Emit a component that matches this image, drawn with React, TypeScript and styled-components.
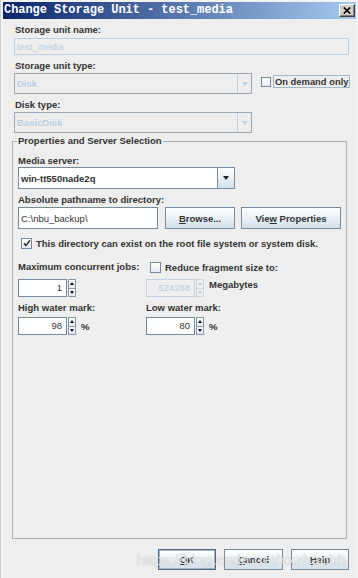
import styled, { createGlobalStyle } from "styled-components";

const GlobalStyle = createGlobalStyle`
  * {
    box-sizing: border-box;
  }
  html,
  body {
    margin: 0;
    padding: 0;
  }
  body {
    width: 358px;
    height: 578px;
    overflow: hidden;
    background: #eeeeee;
    font-family: "Liberation Sans", Arial, sans-serif;
  }
`;

const Window = styled.div`
  width: 358px;
  height: 578px;
  display: flex;
  flex-direction: column;
  padding: 2px 2px 0 2px;
  background: #f3f3f3;
  border-left: 1px solid #d0d0d0;
`;

const TitleBar = styled.div`
  flex: none;
  height: 17px;
  display: flex;
  align-items: center;
  justify-content: space-between;
  padding: 0 1px 0 1px;
  background: linear-gradient(to right, #0a246a 0%, #a6caf0 100%);
`;

const TitleText = styled.div`
  font-family: "Liberation Mono", "Courier New", monospace;
  font-weight: bold;
  font-size: 12px;
  line-height: 17px;
  letter-spacing: -0.05px;
  color: #ffffff;
  white-space: nowrap;
`;

const CloseButton = styled.div`
  width: 16px;
  height: 13px;
  display: flex;
  align-items: center;
  justify-content: center;
  background: #d4d0c8;
  border: 1px solid;
  border-color: #ffffff #404040 #404040 #ffffff;
  box-shadow: inset -1px -1px #808080;
`;

const Body = styled.div`
  flex: 1;
  min-height: 0;
  display: flex;
  flex-direction: column;
  padding: 5px 7px 8px 9px;
  background: #eeeeee;
`;

const TopSection = styled.div`
  flex: none;
  margin-left: 2px;
  display: flex;
  flex-direction: column;
`;

const Label = styled.div<{ $mt?: number; $mb?: number; $pl?: number }>`
  margin-top: ${(p) => p.$mt ?? 0}px;
  margin-bottom: ${(p) => p.$mb ?? 0}px;
  padding-left: ${(p) => p.$pl ?? 0}px;
  height: 12px;
  line-height: 12px;
  font-size: 9.5px;
  font-weight: bold;
  color: #333333;
  white-space: nowrap;
`;

const TextField = styled.div<{ $w: number; $h: number; $disabled?: boolean }>`
  flex: none;
  width: ${(p) => p.$w}px;
  height: ${(p) => p.$h}px;
  display: flex;
  align-items: center;
  padding-left: 2px;
  border: 1px solid ${(p) => (p.$disabled ? "#b8cfe5" : "#7a8a99")};
  background: ${(p) => (p.$disabled ? "#eeeeee" : "#ffffff")};
  color: ${(p) => (p.$disabled ? "#b8cfe5" : "#333333")};
  font-size: 9.5px;
  white-space: nowrap;
`;

const ComboFrame = styled.div<{ $w: number; $h: number; $disabled?: boolean }>`
  flex: none;
  width: ${(p) => p.$w}px;
  height: ${(p) => p.$h}px;
  display: flex;
  border: 1px solid ${(p) => (p.$disabled ? "#9ba7b3" : "#7a8a99")};
  background: ${(p) => (p.$disabled ? "#eeeeee" : "#ffffff")};
`;

const ComboValue = styled.div<{ $disabled?: boolean }>`
  flex: 1;
  display: flex;
  align-items: center;
  padding-left: 2px;
  font-size: 9.5px;
  font-weight: bold;
  color: ${(p) => (p.$disabled ? "#b8cfe5" : "#333333")};
  white-space: nowrap;
`;

const ComboArrow = styled.div<{ $w: number; $disabled?: boolean }>`
  flex: none;
  width: ${(p) => p.$w}px;
  display: flex;
  align-items: center;
  justify-content: center;
  border-left: 1px solid ${(p) => (p.$disabled ? "#c4ccd4" : "#7a8a99")};
  background: ${(p) =>
    p.$disabled
      ? "#eeeeee"
      : "linear-gradient(to bottom, #ffffff 0%, #eef3f8 40%, #d3e0ec 100%)"};
`;

const DownArrow = styled.span<{ $disabled?: boolean }>`
  width: 0;
  height: 0;
  border-left: 3.5px solid transparent;
  border-right: 3.5px solid transparent;
  border-top: 4px solid ${(p) => (p.$disabled ? "#b8cfe5" : "#222222")};
`;

const ComboRow = styled.div`
  display: flex;
  align-items: flex-start;
`;

const DemandCheck = styled.div`
  display: flex;
  align-items: center;
  gap: 2px;
  margin-left: 9px;
  margin-top: 2px;
`;

const FocusLabel = styled.div`
  height: 13px;
  line-height: 11px;
  padding: 0 1px;
  border: 1px solid #a3b8cc;
  font-size: 9.4px;
  font-weight: bold;
  color: #333333;
  white-space: nowrap;
`;

const CheckBox = styled.span<{ $size: number }>`
  flex: none;
  width: ${(p) => p.$size}px;
  height: ${(p) => p.$size}px;
  display: inline-flex;
  align-items: center;
  justify-content: center;
  border: 1px solid #7a8a99;
  background: linear-gradient(to bottom, #ffffff 0%, #e3ebf4 100%);
`;

const Group = styled.fieldset`
  flex: 1;
  min-height: 0;
  min-width: 0;
  margin: 2px 2px 0 0;
  padding: 0;
  border: 1px solid #a9b0b8;
`;

const Legend = styled.legend`
  margin-left: 4px;
  padding: 0 1px;
  height: 12px;
  line-height: 12px;
  font-size: 9.5px;
  font-weight: bold;
  color: #333333;
  white-space: nowrap;
`;

const GroupBody = styled.div`
  display: flex;
  flex-direction: column;
  padding-left: 5px;
`;

const PathRow = styled.div`
  display: flex;
`;

const PushButton = styled.div<{ $w: number; $h: number; $ml?: number; $default?: boolean }>`
  flex: none;
  width: ${(p) => p.$w}px;
  height: ${(p) => p.$h}px;
  margin-left: ${(p) => p.$ml ?? 0}px;
  display: flex;
  align-items: center;
  justify-content: center;
  border: 1px solid ${(p) => (p.$default ? "#53687f" : "#7a8a99")};
  box-shadow: ${(p) => (p.$default ? "inset 0 0 0 1px #9fb3c7" : "none")};
  background: linear-gradient(to bottom, #ffffff 0%, #f0f5fa 35%, #d2dfec 100%);
  font-size: 9.5px;
  font-weight: bold;
  color: #333333;
  white-space: pre;
`;

const Mnemonic = styled.span`
  text-decoration: underline;
`;

const CheckRow = styled.div<{ $mt?: number; $ml?: number }>`
  display: flex;
  align-items: center;
  gap: 4px;
  height: 12px;
  margin-top: ${(p) => p.$mt ?? 0}px;
  margin-left: ${(p) => p.$ml ?? 0}px;
`;

const CheckText = styled.span`
  font-size: 9.5px;
  font-weight: bold;
  color: #333333;
  white-space: nowrap;
`;

const OptionRow = styled.div<{ $mt: number }>`
  display: grid;
  grid-template-columns: 128px 1fr;
  margin-top: ${(p) => p.$mt}px;
`;

const SpinRow = styled.div`
  display: flex;
  align-items: flex-start;
`;

const SpinFrame = styled.div`
  flex: none;
  display: flex;
  gap: 1px;
  height: 18px;
`;

const SpinField = styled.div<{ $disabled?: boolean }>`
  width: 49px;
  height: 18px;
  padding-right: 4px;
  text-align: right;
  line-height: 16px;
  border: 1px solid ${(p) => (p.$disabled ? "#c6d3e0" : "#7a8a99")};
  background: ${(p) => (p.$disabled ? "#eeeeee" : "#ffffff")};
  color: ${(p) => (p.$disabled ? "#b8cfe5" : "#333333")};
  font-size: 9.5px;
`;

const SpinButtons = styled.div`
  width: 8px;
  display: flex;
  flex-direction: column;
`;

const SpinButton = styled.div<{ $disabled?: boolean }>`
  flex: 1;
  display: flex;
  align-items: center;
  justify-content: center;
  border: 1px solid ${(p) => (p.$disabled ? "#cdd6df" : "#8d9aa7")};
  background: ${(p) =>
    p.$disabled ? "#eeeeee" : "linear-gradient(to bottom, #ffffff 0%, #dde7f1 100%)"};
  & + & {
    border-top: none;
  }
`;

const TinyArrow = styled.span<{ $up?: boolean; $disabled?: boolean }>`
  width: 0;
  height: 0;
  border-left: 2px solid transparent;
  border-right: 2px solid transparent;
  ${(p) =>
    p.$up
      ? `border-bottom: 3px solid ${p.$disabled ? "#c0ccd8" : "#111111"};`
      : `border-top: 3px solid ${p.$disabled ? "#c0ccd8" : "#111111"};`}
`;

const Unit = styled.span<{ $mt?: number }>`
  margin-left: 5px;
  margin-top: ${(p) => p.$mt ?? 0}px;
  line-height: 12px;
  font-size: 9.5px;
  font-weight: bold;
  color: #333333;
  white-space: nowrap;
`;

const ButtonRow = styled.div`
  position: relative;
  flex: none;
  display: flex;
  justify-content: flex-end;
  gap: 8px;
  margin-top: 10px;
`;

const Watermark = styled.div`
  position: absolute;
  right: 3px;
  top: 0;
  z-index: 1;
  line-height: 21px;
  font-size: 15.5px;
  color: rgba(255, 255, 255, 0.72);
  text-shadow: 0 0 1px rgba(110, 110, 110, 0.55);
  white-space: nowrap;
  pointer-events: none;
`;

function ComboBox({
  value,
  width,
  height,
  arrowWidth,
  disabled,
}: {
  value: string;
  width: number;
  height: number;
  arrowWidth: number;
  disabled?: boolean;
}) {
  return (
    <ComboFrame $w={width} $h={height} $disabled={disabled}>
      <ComboValue $disabled={disabled}>{value}</ComboValue>
      <ComboArrow $w={arrowWidth} $disabled={disabled}>
        <DownArrow $disabled={disabled} />
      </ComboArrow>
    </ComboFrame>
  );
}

function Spinner({ value, disabled }: { value: string; disabled?: boolean }) {
  return (
    <SpinFrame>
      <SpinField $disabled={disabled}>{value}</SpinField>
      <SpinButtons>
        <SpinButton $disabled={disabled}>
          <TinyArrow $up $disabled={disabled} />
        </SpinButton>
        <SpinButton $disabled={disabled}>
          <TinyArrow $disabled={disabled} />
        </SpinButton>
      </SpinButtons>
    </SpinFrame>
  );
}

const CheckMark = () => (
  <svg width="8" height="8" viewBox="0 0 8 8">
    <path d="M1 4.2 L3 6.6 L7 1.2" fill="none" stroke="#2b2b2b" strokeWidth="1.5" />
  </svg>
);

export default function App() {
  return (
    <>
      <GlobalStyle />
      <Window>
        <TitleBar>
          <TitleText>Change Storage Unit - test_media</TitleText>
          <CloseButton>
            <svg width="8" height="7" viewBox="0 0 8 7">
              <path d="M0.8 0.5 L7.2 6.5 M7.2 0.5 L0.8 6.5" stroke="#000" strokeWidth="1.7" />
            </svg>
          </CloseButton>
        </TitleBar>
        <Body>
          <TopSection>
            <Label $pl={1} $mb={2}>
              Storage unit name:
            </Label>
            <TextField $w={335} $h={17} $disabled>
              test_media
            </TextField>
            <Label $pl={1} $mt={5} $mb={1}>
              Storage unit type:
            </Label>
            <ComboRow>
              <ComboBox value="Disk" width={238} height={21} arrowWidth={14} disabled />
              <DemandCheck>
                <CheckBox $size={10} />
                <FocusLabel>On demand only</FocusLabel>
              </DemandCheck>
            </ComboRow>
            <Label $pl={1} $mt={5} $mb={1}>
              Disk type:
            </Label>
            <ComboBox value="BasicDisk" width={238} height={21} arrowWidth={14} disabled />
          </TopSection>

          <Group>
            <Legend>Properties and Server Selection</Legend>
            <GroupBody>
              <Label $mt={8}>Media server:</Label>
              <ComboBox value="win-tt550nade2q" width={217} height={22} arrowWidth={17} />
              <Label $mt={5} $mb={1}>
                Absolute pathname to directory:
              </Label>
              <PathRow>
                <TextField $w={140} $h={22}>
                  {"C:\\nbu_backup\\"}
                </TextField>
                <PushButton $w={70} $h={22} $ml={7}>
                  <span>
                    <Mnemonic>B</Mnemonic>rowse...
                  </span>
                </PushButton>
                <PushButton $w={100} $h={22} $ml={6}>
                  <span>
                    Vie<Mnemonic>w</Mnemonic>
                    {" Properties"}
                  </span>
                </PushButton>
              </PathRow>
              <CheckRow $mt={8} $ml={3}>
                <CheckBox $size={11}>
                  <CheckMark />
                </CheckBox>
                <CheckText>This directory can exist on the root file system or system disk.</CheckText>
              </CheckRow>

              <OptionRow $mt={12}>
                <Label>Maximum concurrent jobs:</Label>
                <CheckRow $ml={4}>
                  <CheckBox $size={11} />
                  <CheckText>Reduce fragment size to:</CheckText>
                </CheckRow>
              </OptionRow>
              <OptionRow $mt={6}>
                <SpinRow>
                  <Spinner value="1" />
                </SpinRow>
                <SpinRow>
                  <Spinner value="524288" disabled />
                  <Unit $mt={0}>Megabytes</Unit>
                </SpinRow>
              </OptionRow>
              <OptionRow $mt={5}>
                <Label>High water mark:</Label>
                <Label>Low water mark:</Label>
              </OptionRow>
              <OptionRow $mt={3}>
                <SpinRow>
                  <Spinner value="98" />
                  <Unit $mt={4}>%</Unit>
                </SpinRow>
                <SpinRow>
                  <Spinner value="80" />
                  <Unit $mt={4}>%</Unit>
                </SpinRow>
              </OptionRow>
            </GroupBody>
          </Group>

          <ButtonRow>
            <Watermark>https://blog.csdn.net/xxzhaobb</Watermark>
            <PushButton $w={58} $h={21} $default>
              <span>
                <Mnemonic>O</Mnemonic>K
              </span>
            </PushButton>
            <PushButton $w={59} $h={21}>
              <span>
                <Mnemonic>C</Mnemonic>ancel
              </span>
            </PushButton>
            <PushButton $w={58} $h={21}>
              <span>
                <Mnemonic>H</Mnemonic>elp
              </span>
            </PushButton>
          </ButtonRow>
        </Body>
      </Window>
    </>
  );
}
